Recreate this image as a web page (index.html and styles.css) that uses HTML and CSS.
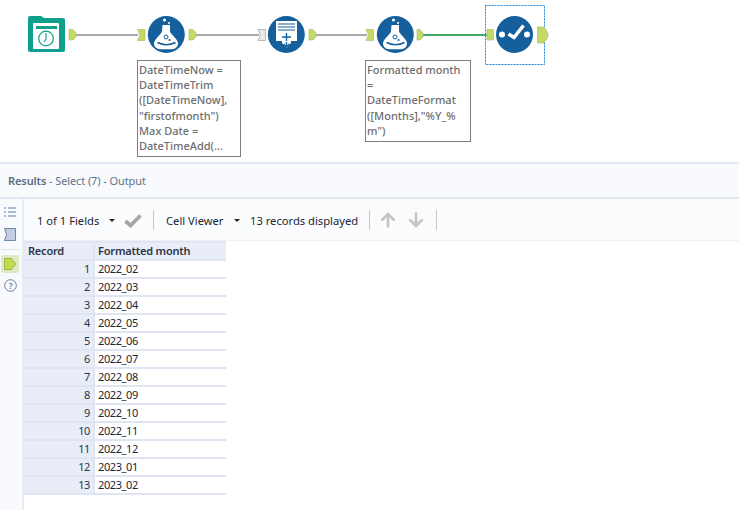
FILE: index.html
```html
<!DOCTYPE html>
<html lang="en">
<head>
<meta charset="utf-8">
<title>Results</title>
<link rel="stylesheet" href="styles.css">
</head>
<body>
<div class="app">
  <section class="canvas">
    <svg class="flow" width="739" height="162" viewBox="0 0 739 162">
      <rect x="485.500" y="5.500" width="59" height="59" fill="none" stroke="#1a86d8" stroke-dasharray="2 1"/>
      <g fill="none" stroke="#a9a9a9" stroke-width="2">
        <path d="M76 35H138M196 35H259M316 35H367"/>
      </g>
      <path d="M423 35H488" fill="none" stroke="#3fa767" stroke-width="2"/>
      <!-- input data -->
      <path d="M30 16h11l3 2h19a2 2 0 0 1 2 2v30a2 2 0 0 1-2 2H30a2 2 0 0 1-2-2V18a2 2 0 0 1 2-2z" fill="#0ea08c"/>
      <rect x="33" y="23" width="26" height="26" rx="1" fill="#fff"/>
      <rect x="36" y="26" width="21" height="3" fill="#0ea08c"/>
      <circle cx="46" cy="38.500" r="7.300" fill="none" stroke="#0ea08c" stroke-width="1.200"/>
      <path d="M46 33v6l-2 3" fill="none" stroke="#0ea08c" stroke-width="1.100"/>
      <!-- anchors -->
      <g fill="#c3da64" stroke="#aebf6e" stroke-width="0.700">
        <path d="M69 29.500h4l3 3.500v4l-3 3h-4z"/>
        <path d="M137.500 29.500h7.500v11h-7.500l2.500-5.500z"/>
        <path d="M189 29.500h4l3 3.500v4l-3 3h-4z"/>
        <path d="M309 29.500h4l3 3.500v4l-3 3h-4z"/>
        <path d="M366 29.500h7.500v11h-7.500l2.500-5.500z"/>
        <path d="M417 29.500h3l3 3.500v4l-3 3h-3z"/>
        <path d="M487 29.500h6.500v10.500h-6.500z"/>
        <path d="M537.500 27h6.500l4 6v4l-4 6h-6.500z"/>
      </g>
      <path d="M258 29.500h7.500v11h-7.500l2.500-5.500z" fill="#e9e9e9" stroke="#a9a9a9" stroke-width="0.800"/>
      <!-- formula 1 -->
      <g>
        <circle cx="166.300" cy="34.500" r="18.500" fill="#15609c"/>
        <path d="M162.500 25h7.500v6q0 1 .8 2l5.200 6q2.800 3.500 1.800 6q-1 4-6.300 4.300h-11q-5.300-.3-6.300-4.300q-1-2.500 1.800-6l5.200-6q.8-1 .8-2z" fill="#fff"/>
        <circle cx="164.500" cy="20" r="1.500" fill="#fff"/>
        <circle cx="169" cy="23" r="1" fill="#fff"/>
        <circle cx="166" cy="37" r="2" fill="none" stroke="#15609c" stroke-width="1"/>
        <circle cx="169.500" cy="40" r="1.100" fill="#15609c"/>
        <path d="M157.500 42.500q9 4.500 18 0" fill="none" stroke="#15609c" stroke-width="1.600"/>
      </g>
      <!-- union -->
      <circle cx="286.300" cy="34.500" r="18.500" fill="#15609c"/>
      <path d="M276 21h21v20h-6v2l-4.500 5-4.500-5v-2h-6z" fill="#fff"/>
      <path d="M278 24h17M278 27h17M278 30h17" stroke="#15609c" stroke-width="1"/>
      <path d="M282 37h9M286.500 33v8M286.500 42v4M283.500 44l3 3 3-3" fill="none" stroke="#15609c" stroke-width="1.400"/>
      <!-- formula 2 -->
      <g>
        <circle cx="395.300" cy="34.500" r="18.500" fill="#15609c"/>
        <path d="M391.500 25h7.500v6q0 1 .8 2l5.200 6q2.800 3.500 1.800 6q-1 4-6.300 4.300h-11q-5.300-.3-6.300-4.300q-1-2.500 1.800-6l5.200-6q.8-1 .8-2z" fill="#fff"/>
        <circle cx="393.500" cy="20" r="1.500" fill="#fff"/>
        <circle cx="398" cy="23" r="1" fill="#fff"/>
        <circle cx="395" cy="37" r="2" fill="none" stroke="#15609c" stroke-width="1"/>
        <circle cx="398.500" cy="40" r="1.100" fill="#15609c"/>
        <path d="M386.500 42.500q9 4.500 18 0" fill="none" stroke="#15609c" stroke-width="1.600"/>
      </g>
      <!-- select -->
      <circle cx="514.500" cy="34.500" r="18.500" fill="#15609c"/>
      <circle cx="502" cy="34.500" r="3" fill="#fff"/>
      <circle cx="527" cy="34.500" r="3" fill="#fff"/>
      <path d="M508.500 34l5.500 3.500 9.500-12" fill="none" stroke="#fff" stroke-width="3.500"/>
    </svg>
    <div class="note note-a">DateTimeNow =<br>DateTimeTrim<br>([DateTimeNow],<br>"firstofmonth")<br>Max Date =<br>DateTimeAdd(...</div>
    <div class="note note-b">Formatted month<br>=<br>DateTimeFormat<br>([Months],"%Y_%<br>m")</div>
  </section>

  <header class="results-bar"><strong>Results</strong> - Select (7) - Output</header>

  <div class="workspace">
    <nav class="rail">
      <svg class="rail-ico" width="12" height="10" viewBox="0 0 12 10"><path d="M0 1h2M4 1h8M0 5h2M4 5h8M0 9h2M4 9h8" stroke="#5d7ba6" stroke-width="1"/></svg>
      <svg class="rail-ico book" width="12" height="13" viewBox="0 0 12 13"><path d="M0.500 0.500h11v12h-11l2-6z" fill="#c2cde2" stroke="#6f86ad"/></svg>
      <div class="rail-sep"></div>
      <div class="rail-on"><svg width="12" height="12" viewBox="0 0 12 12"><path d="M0.500 0.500h7l4 5v1l-4 5h-7z" fill="#c3da4f" stroke="#9ab04a"/></svg></div>
      <svg class="rail-ico" width="13" height="13" viewBox="0 0 13 13"><circle cx="6.500" cy="6.500" r="5.800" fill="none" stroke="#6d7f9c"/><text x="6.500" y="9.500" text-anchor="middle" class="q">?</text></svg>
    </nav>
    <main class="main">
      <div class="toolbar">
        <span class="tool fields">1 of 1 Fields</span>
        <span class="caret c1"></span>
        <svg class="check" width="18" height="14" viewBox="0 0 18 14"><path d="M1.500 7l5 4.500 10-10" fill="none" stroke="#a6a6a6" stroke-width="3.800"/></svg>
        <span class="tsep s1"></span>
        <span class="tool viewer">Cell Viewer</span>
        <span class="caret c2"></span>
        <span class="tool count">13 records displayed</span>
        <span class="tsep s2"></span>
        <svg class="arrow a1" width="16" height="16" viewBox="0 0 16 16"><path d="M8 15.500V2M1.500 8.500L8 2l6.500 6.500" fill="none" stroke="#c4c4c4" stroke-width="2.600"/></svg>
        <svg class="arrow a2" width="16" height="16" viewBox="0 0 16 16"><path d="M8 .5V14M1.500 7.500L8 14l6.500-6.500" fill="none" stroke="#c4c4c4" stroke-width="2.600"/></svg>
        <span class="tsep s3"></span>
      </div>
      <div class="grid">
        <div class="th th-rec">Record</div><div class="th">Formatted month</div>
        <div class="num">1</div><div class="td">2022_02</div>
        <div class="num">2</div><div class="td">2022_03</div>
        <div class="num">3</div><div class="td">2022_04</div>
        <div class="num">4</div><div class="td">2022_05</div>
        <div class="num">5</div><div class="td">2022_06</div>
        <div class="num">6</div><div class="td">2022_07</div>
        <div class="num">7</div><div class="td">2022_08</div>
        <div class="num">8</div><div class="td">2022_09</div>
        <div class="num">9</div><div class="td">2022_10</div>
        <div class="num">10</div><div class="td">2022_11</div>
        <div class="num">11</div><div class="td">2022_12</div>
        <div class="num">12</div><div class="td">2023_01</div>
        <div class="num">13</div><div class="td">2023_02</div>
      </div>
    </main>
  </div>
</div>
</body>
</html>
```
FILE: styles.css
```css
* { box-sizing: border-box; }
html, body { margin: 0; padding: 0; }
body { width: 739px; height: 510px; overflow: hidden; background: #fff; font-family: "Noto Sans", "Open Sans", sans-serif; font-size: 12px; color: #1f2a3a; }
.app { display: flex; flex-direction: column; height: 510px; }
.canvas { position: relative; height: 162px; flex: none; background: #fff; }
.flow { position: absolute; left: 0; top: 0; display: block; }
.note { position: absolute; top: 60px; border: 1px solid #7f7f7f; background: #fff; color: #6e6e6e; font-weight: 500; font-size: 11px; line-height: 15.2px; padding: 1px 0 0 1px; white-space: nowrap; }
.note-a { left: 137px; width: 104px; height: 97px; }
.note-b { left: 365px; width: 106px; height: 82px; }
.results-bar { flex: none; height: 37px; border-top: 2px solid #e1e8f4; border-bottom: 2px solid #e1e8f4; background: #f8fafe; padding: 9px 0 0 8px; font-size: 11px; letter-spacing: -0.1px; line-height: 16px; color: #5f7288; }
.results-bar strong { font-weight: 600; color: #5c6b7c; }
.workspace { flex: 1; display: flex; min-height: 0; }
.rail { flex: none; width: 24px; background: #f8fafe; border-right: 2px solid #e6ebf4; display: flex; flex-direction: column; align-items: center; padding: 8px 2px 0 0; }
.rail-ico { display: block; flex: none; }
.book { margin-top: 11px; }
.rail-sep { width: 18px; height: 1px; background: #dfe4ec; margin: 8px 0 5px; flex: none; }
.rail-on { width: 18px; height: 18px; flex: none; border-radius: 3px; background: #dcebc0; display: flex; align-items: center; justify-content: center; margin-bottom: 6px; }
.q { font: 600 9px "Noto Sans", sans-serif; fill: #6d7f9c; }
.main { flex: 1; min-width: 0; background: #fff; }
.toolbar { position: relative; height: 42px; background: #fbfcfe; border-bottom: 1px solid #eef0f4; }
.tool { position: absolute; top: 13px; line-height: 17px; font-size: 11.200px; color: #1b2533; white-space: nowrap; }
.fields { left: 13px; }
.viewer { left: 142px; }
.count { left: 226px; }
.caret { position: absolute; top: 20px; width: 0; height: 0; border-left: 3px solid transparent; border-right: 3px solid transparent; border-top: 3px solid #222; }
.c1 { left: 85px; }
.c2 { left: 210px; }
.check { position: absolute; left: 100px; top: 15px; }
.tsep { position: absolute; top: 11px; width: 1px; height: 20px; background: #c8c8c8; }
.s1 { left: 129px; }
.s2 { left: 345px; }
.s3 { left: 412px; }
.arrow { position: absolute; top: 13px; }
.a1 { left: 356px; }
.a2 { left: 384px; }
.grid { display: grid; width: 202px; grid-template-columns: 69px 131px; grid-auto-rows: 16px; gap: 2px; padding: 2px 2px 2px 0; background: #dfe6f2; font-size: 11px; line-height: 16px; }
.th { background: #e8edf8; padding-left: 3px; font-weight: 600; color: #2b3646; letter-spacing: -0.2px; }
.th-rec { padding-left: 4px; }
.num { background: #e8edf8; text-align: right; padding-right: 3px; color: #2b3646; letter-spacing: -0.4px; }
.td { background: #fff; padding-left: 3px; color: #1b2533; letter-spacing: -0.4px; }
```
